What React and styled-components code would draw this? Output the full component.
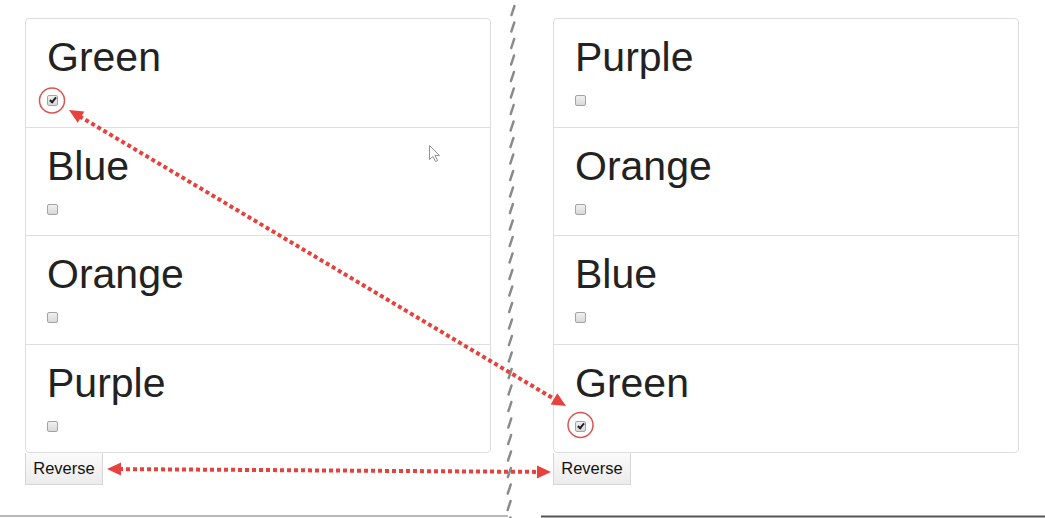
import React, { useState } from "react";
import styled, { createGlobalStyle } from "styled-components";

const Global = createGlobalStyle`
  html, body { margin: 0; padding: 0; background: #fff; }
  body { font-family: "Liberation Sans", Arial, sans-serif; color: #222; }
`;

const Page = styled.div`
  position: relative;
  width: 1045px;
  height: 518px;
  overflow: hidden;
  display: grid;
  grid-template-columns: 466px 466px;
  column-gap: 62px;
  padding: 18px 0 0 25px;
  box-sizing: border-box;
  align-items: start;
`;

const Column = styled.div`
  display: flex;
  flex-direction: column;
  align-items: flex-start;
`;

const Panel = styled.ul`
  list-style: none;
  margin: 0;
  padding: 0;
  width: 100%;
  box-sizing: border-box;
  border: 1px solid #dedede;
  border-radius: 4px;
`;

const Item = styled.li`
  display: flex;
  flex-direction: column;
  align-items: flex-start;
  padding: 16px 21px 0;
  height: 107.5px;
  box-sizing: border-box;
  & + & {
    border-top: 1px solid #dedede;
    height: 108.5px;
  }
`;

const Title = styled.h1`
  margin: 0;
  font-size: 41px;
  line-height: 44px;
  font-weight: 400;
  color: #222;
`;

const Check = styled.input.attrs({ type: "checkbox" })`
  appearance: none;
  -webkit-appearance: none;
  margin: 16px 0 0 0;
  width: 11px;
  height: 11px;
  box-sizing: border-box;
  border: 1px solid #a3a3a3;
  border-radius: 2px;
  background: linear-gradient(#f0f0f0, #d9d9d9);
  position: relative;
  cursor: pointer;
  &:checked::after {
    content: "";
    position: absolute;
    left: 3px;
    top: 0px;
    width: 2px;
    height: 5px;
    border: solid #222;
    border-width: 0 2px 2px 0;
    transform: rotate(40deg);
  }
`;

const Button = styled.button`
  margin: 0;
  width: 78px;
  height: 32px;
  padding: 0;
  border: 1px solid #d6d6d6;
  border-top: none;
  background: linear-gradient(#fafafa, #ececec);
  font-family: "Liberation Sans", Arial, sans-serif;
  font-size: 16.5px;
  color: #111;
  cursor: pointer;
`;

const Overlay = styled.svg`
  position: absolute;
  left: 0;
  top: 0;
  width: 1045px;
  height: 518px;
  pointer-events: none;
`;

const RED = "#e8413d";

function head(tip, from, L = 14, w = 6.5) {
  const dx = tip[0] - from[0];
  const dy = tip[1] - from[1];
  const len = Math.hypot(dx, dy);
  const ux = dx / len;
  const uy = dy / len;
  const bx = tip[0] - ux * L;
  const by = tip[1] - uy * L;
  const nx = -uy;
  const ny = ux;
  return `${tip[0]},${tip[1]} ${bx + nx * w},${by + ny * w} ${bx - nx * w},${by - ny * w}`;
}

function Arrow({ a, b }) {
  const dx = b[0] - a[0];
  const dy = b[1] - a[1];
  const len = Math.hypot(dx, dy);
  const ux = dx / len;
  const uy = dy / len;
  const s = [a[0] + ux * 12, a[1] + uy * 12];
  const e = [b[0] - ux * 12, b[1] - uy * 12];
  return (
    <g>
      <line
        x1={s[0]}
        y1={s[1]}
        x2={e[0]}
        y2={e[1]}
        stroke={RED}
        strokeWidth="4"
        strokeDasharray="4 3"
      />
      <polygon points={head(a, b)} fill={RED} />
      <polygon points={head(b, a)} fill={RED} />
    </g>
  );
}

function Divider() {
  const dashes = [];
  for (let y = 6; y < 518; y += 16.5) {
    const x = 513 - (y / 518) * 4;
    dashes.push(
      <line
        key={y}
        x1={x + 1.5}
        y1={y}
        x2={x - 1.5}
        y2={y + 9}
        stroke="#8a8a8a"
        strokeWidth="2.4"
        strokeLinecap="round"
      />
    );
  }
  return <g>{dashes}</g>;
}

function List({ items, onToggle, onReverse }) {
  return (
    <Column>
      <Panel>
        {items.map((it) => (
          <Item key={it.name}>
            <Title>{it.name}</Title>
            <Check checked={it.checked} onChange={() => onToggle(it.name)} />
          </Item>
        ))}
      </Panel>
      <Button onClick={onReverse}>Reverse</Button>
    </Column>
  );
}

export default function App() {
  const [items, setItems] = useState([
    { name: "Green", checked: true },
    { name: "Blue", checked: false },
    { name: "Orange", checked: false },
    { name: "Purple", checked: false },
  ]);
  const [reversed, setReversed] = useState(false);
  const left = reversed ? [...items].reverse() : items;
  const right = reversed ? items : [...items].reverse();
  const toggle = (name) =>
    setItems((prev) =>
      prev.map((p) => (p.name === name ? { ...p, checked: !p.checked } : p))
    );
  return (
    <>
      <Global />
      <Page>
        <List items={left} onToggle={toggle} onReverse={() => setReversed((r) => !r)} />
        <List items={right} onToggle={toggle} onReverse={() => setReversed((r) => !r)} />
        <Overlay viewBox="0 0 1045 518">
          <Divider />
          <line x1="0" y1="516" x2="508" y2="516" stroke="#b8b8b8" strokeWidth="2" />
          <line x1="541" y1="516.5" x2="1045" y2="516.5" stroke="#555" strokeWidth="2" />
          <circle cx="52" cy="100.5" r="12.5" fill="none" stroke="#d9534f" strokeWidth="1.5" />
          <circle cx="580.5" cy="425" r="12.5" fill="none" stroke="#d9534f" strokeWidth="1.5" />
          <Arrow a={[69, 110]} b={[566, 406]} />
          <Arrow a={[107, 469]} b={[551, 472]} />
          <path
            d="M429.5 145.5 L439.5 155.5 L435 155.5 L437.5 160.5 L435.5 161.5 L433 156.5 L429.5 159.5 Z"
            fill="#fff"
            stroke="#777"
            strokeWidth="0.8"
          />
        </Overlay>
      </Page>
    </>
  );
}
